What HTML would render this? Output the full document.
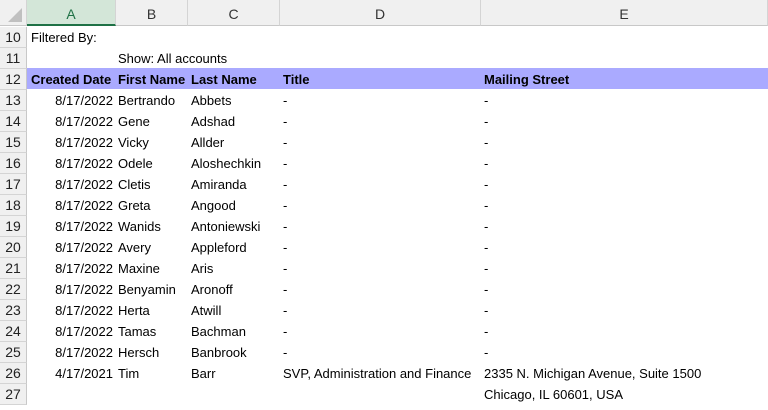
<!DOCTYPE html>
<html><head><style>
body{margin:0;width:768px;height:410px;overflow:hidden;background:#fff;font-family:"Liberation Sans",sans-serif;font-size:13px;color:#000;position:relative}
.ch{position:absolute;top:0;height:26px;background:#f0f0f0;border-bottom:1px solid #c8c8c8;border-right:1px solid #d4d4d4;box-sizing:border-box;text-align:center;line-height:28px;font-size:14px;color:#333}
.rh{position:absolute;left:0;width:27px;height:21px;background:#f0f0f0;border-bottom:1px solid #d4d4d4;border-right:1px solid #c8c8c8;box-sizing:border-box;text-align:center;line-height:21px;font-size:14px;color:#222}
.c{position:absolute;height:21px;line-height:21px;white-space:nowrap}
.band{position:absolute;left:27px;right:0;top:68px;height:21px;background:#aaaaff}
</style></head><body>
<div class="ch" style="left:0;width:27px"><svg width="27" height="26" style="position:absolute;left:0;top:0"><polygon points="22,8 22,22 8,22" fill="#c0c0c0"/></svg></div>
<div class="ch" style="left:27px;width:89px;color:#1e7145;background:#d3e6d8;border-bottom:2px solid #1e7145">A</div>
<div class="ch" style="left:116px;width:72px">B</div>
<div class="ch" style="left:188px;width:92px">C</div>
<div class="ch" style="left:280px;width:201px">D</div>
<div class="ch" style="left:481px;width:287px">E</div>
<div class="band"></div>
<div id="rows"></div>
<script>
var d=[["8/17/2022","Bertrando","Abbets"],["8/17/2022","Gene","Adshad"],["8/17/2022","Vicky","Allder"],["8/17/2022","Odele","Aloshechkin"],["8/17/2022","Cletis","Amiranda"],["8/17/2022","Greta","Angood"],["8/17/2022","Wanids","Antoniewski"],["8/17/2022","Avery","Appleford"],["8/17/2022","Maxine","Aris"],["8/17/2022","Benyamin","Aronoff"],["8/17/2022","Herta","Atwill"],["8/17/2022","Tamas","Bachman"],["8/17/2022","Hersch","Banbrook"]];
var h="";
for(var i=0;i<18;i++){h+='<div class="rh" style="top:'+(27+21*i)+'px">'+(10+i)+'</div>';}
function c(x,y,t,s){return '<div class="c" style="left:'+x+'px;top:'+y+'px;'+(s||'')+'">'+t+'</div>';}
h+=c(31,27,"Filtered By:")+c(118,48,"Show: All accounts");
var b="font-weight:bold;";
h+=c(31,69,"Created Date",b)+c(118,69,"First Name",b)+c(191,69,"Last Name",b)+c(283,69,"Title",b)+c(484,69,"Mailing Street",b);
for(var j=0;j<d.length;j++){var y=90+21*j;
h+='<div class="c" style="left:27px;width:86px;text-align:right;top:'+y+'px">'+d[j][0]+'</div>'+c(118,y,d[j][1])+c(191,y,d[j][2])+c(283,y,"-")+c(484,y,"-");}
var y=90+21*13;
h+='<div class="c" style="left:27px;width:86px;text-align:right;top:'+y+'px">4/17/2021</div>'+c(118,y,"Tim")+c(191,y,"Barr")+c(283,y,"SVP, Administration and Finance")+c(484,y,"2335 N. Michigan Avenue, Suite 1500")+c(484,y+21,"Chicago, IL 60601, USA");
document.getElementById("rows").innerHTML=h;
</script>
</body></html>
